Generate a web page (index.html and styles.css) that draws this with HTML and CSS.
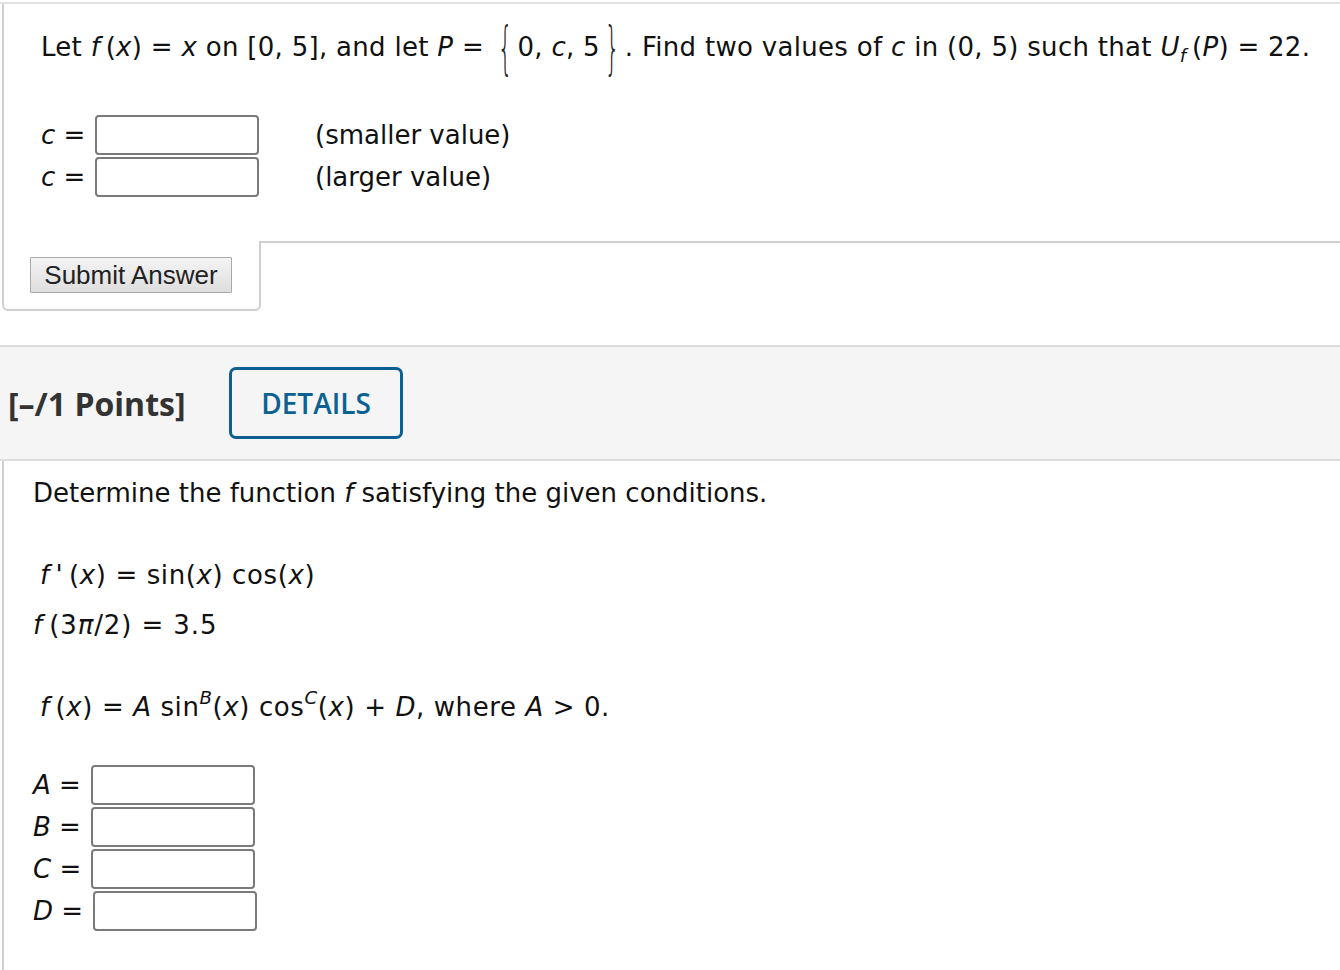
FILE: index.html
```html
<!DOCTYPE html>
<html>
<head>
<meta charset="utf-8">
<link rel="stylesheet" href="styles.css">
</head>
<body>
<div class="q1">
  <div class="q1-body">
    <p class="prompt">Let <i>f</i>&#8201;(<i>x</i>) = <i>x</i> on [0, 5], and let <i>P</i> = <span class="brace">{</span>0, <i>c</i>, 5<span class="brace">}</span>. Find two values of <i>c</i> in (0, 5) such that <i>U<sub>f</sub></i>&#8201;(<i>P</i>) = 22.</p>
    <div class="answers">
      <div class="arow"><span class="lbl"><i>c</i> =</span><span class="box"></span><span class="note">(smaller value)</span></div>
      <div class="arow"><span class="lbl"><i>c</i> =</span><span class="box"></span><span class="note">(larger value)</span></div>
    </div>
  </div>
  <div class="submit-row">
    <div class="submit-tab"><button class="submit">Submit Answer</button></div>
    <div class="submit-fill"></div>
  </div>
</div>

<div class="q2-head">
  <span class="points">[–/1 Points]</span>
  <span class="details">DETAILS</span>
</div>

<div class="q2-body">
  <p class="intro">Determine the function <i>f</i> satisfying the given conditions.</p>
  <p class="eq eq1"><i>f</i>&#8201;'&#8201;(<i>x</i>) = sin(<i>x</i>) cos(<i>x</i>)</p>
  <p class="eq eq2"><i>f</i>&#8201;(3<i>π</i>/2) = 3.5</p>
  <p class="eq eq3"><i>f</i>&#8201;(<i>x</i>) = <i>A</i> sin<sup><i>B</i></sup>(<i>x</i>) cos<sup><i>C</i></sup>(<i>x</i>) + <i>D</i>, where <i>A</i> &gt; 0.</p>
  <div class="answers2">
    <div class="arow2"><span class="lbl2"><i>A</i> =</span><span class="box"></span></div>
    <div class="arow2"><span class="lbl2"><i>B</i> =</span><span class="box"></span></div>
    <div class="arow2"><span class="lbl2"><i>C</i> =</span><span class="box"></span></div>
    <div class="arow2"><span class="lbl2"><i>D</i> =</span><span class="box"></span></div>
  </div>
</div>
</body>
</html>
```

FILE: styles.css
```css
html, body {
  margin: 0;
  padding: 0;
  background: #fff;
}
body {
  font-family: "DejaVu Sans", Verdana, sans-serif;
  font-size: 26px;
  color: #111;
  overflow: hidden;
}
p { margin: 0; }

.q1 {
  margin-top: 2px;
  border-top: 2px solid #e2e2e2;
}
.q1-body {
  border-left: 2px solid #cfcfcf;
  margin-left: 2px;
  padding: 18px 0 0 37px;
  height: 237px;
  box-sizing: border-box;
}
.prompt {
  line-height: 50px;
  white-space: nowrap;
  letter-spacing: 0.3px;
}
.brace {
  display: inline-block;
  font-weight: 200;
  transform: scale(0.9, 2.2);
  margin: 0 4px;
  color: #222;
}
sub {
  font-size: 70%;
  vertical-align: -6px;
  line-height: 0;
}
sup {
  font-size: 70%;
  vertical-align: 12px;
  line-height: 0;
}
.answers {
  margin-top: 43px;
  display: flex;
  flex-direction: column;
  gap: 2px;
}
.arow {
  display: flex;
  align-items: center;
  height: 40px;
}
.lbl {
  width: 54px;
}
.box {
  display: inline-block;
  width: 164px;
  height: 40px;
  box-sizing: border-box;
  border: 2px solid #7a7a7a;
  border-radius: 4px;
  background: #fff;
}
.note {
  margin-left: 56px;
}

.submit-row {
  display: flex;
}
.submit-tab {
  margin-left: 2px;
  width: 259px;
  height: 70px;
  box-sizing: border-box;
  border-left: 2px solid #cfcfcf;
  border-right: 2px solid #cfcfcf;
  border-bottom: 2px solid #cfcfcf;
  border-bottom-left-radius: 6px;
  border-bottom-right-radius: 6px;
  padding: 16px 0 0 26px;
}
.submit-fill {
  flex: 1;
  border-top: 2px solid #cfcfcf;
}
.submit {
  font-family: "Liberation Sans", Arial, sans-serif;
  font-size: 26px;
  color: #222;
  width: 202px;
  height: 36px;
  padding: 0;
  border: 1px solid #a9a9a9;
  border-radius: 1px;
  background: linear-gradient(#f4f4f4, #dedede);
}

.q2-head {
  margin-top: 34px;
  background: #f5f5f5;
  border-top: 2px solid #dcdcdc;
  border-bottom: 2px solid #dcdcdc;
  height: 116px;
  box-sizing: border-box;
  display: flex;
  align-items: center;
  padding-left: 8px;
}
.points {
  font-family: "Open Sans", sans-serif;
  font-weight: 700;
  font-size: 32px;
  color: #333;
  width: 221px;
}
.details {
  font-family: "Open Sans", sans-serif;
  font-weight: 600;
  font-size: 28px;
  color: #0c6193;
  border: 3px solid #0c5f92;
  border-radius: 7px;
  width: 174px;
  height: 72px;
  box-sizing: border-box;
  display: flex;
  align-items: center;
  justify-content: center;
}

.q2-body {
  margin-left: 2px;
  border-left: 2px solid #cfcfcf;
  padding: 14px 0 60px 29px;
}
.intro {
  line-height: 36px;
}
.eq {
  line-height: 36px;
  letter-spacing: 0.6px;
}
.eq1 { margin-top: 46px; padding-left: 7px; }
.eq2 { margin-top: 14px; letter-spacing: 0.9px; }
.eq3 { margin-top: 46px; padding-left: 7px; }

.answers2 {
  margin-top: 40px;
  display: flex;
  flex-direction: column;
  gap: 2px;
}
.arow2 {
  display: flex;
  align-items: center;
  height: 40px;
}
.lbl2 {
  width: 58px;
}
.arow2:last-child .lbl2 {
  width: 60px;
}
```
